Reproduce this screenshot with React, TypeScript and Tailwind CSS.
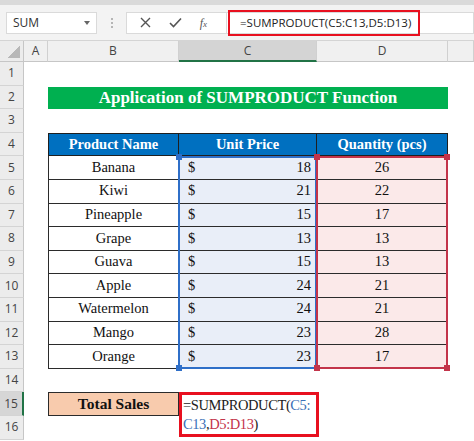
import React from 'react';

const rows = [
  { name: 'Banana', price: 18, qty: 26 },
  { name: 'Kiwi', price: 21, qty: 22 },
  { name: 'Pineapple', price: 15, qty: 17 },
  { name: 'Grape', price: 13, qty: 13 },
  { name: 'Guava', price: 15, qty: 13 },
  { name: 'Apple', price: 24, qty: 21 },
  { name: 'Watermelon', price: 24, qty: 21 },
  { name: 'Mango', price: 23, qty: 28 },
  { name: 'Orange', price: 23, qty: 17 },
];

const ui = { fontFamily: '"Open Sans", "Liberation Sans", sans-serif' };
const serif = { fontFamily: '"Liberation Serif", "Times New Roman", serif' };

const Handle: React.FC<{ className: string }> = ({ className }) => (
  <span className={`absolute w-[6px] h-[6px] ${className}`} />
);

const App: React.FC = () => {
  return (
    <div className="w-[474px] h-[441px] overflow-hidden bg-white">
      {/* top toolbar */}
      <div className="h-[5px] bg-[#dadada]" />
      <div className="h-[36px] bg-[#f3f3f3] flex items-center border-b border-[#d4d4d4]" style={ui}>
        <div className="ml-[6px] w-[91px] h-[22px] bg-white border border-[#dadada] flex items-center justify-between px-[6px]">
          <span className="text-[12px] text-[#333]">SUM</span>
          <span className="w-0 h-0 border-l-[3px] border-r-[3px] border-t-[4px] border-l-transparent border-r-transparent border-t-[#666]" />
        </div>
        <div className="w-[29px] flex flex-col items-center gap-[2px]">
          <span className="w-[2px] h-[2px] bg-[#b5b5b5]" />
          <span className="w-[2px] h-[2px] bg-[#b5b5b5]" />
          <span className="w-[2px] h-[2px] bg-[#b5b5b5]" />
        </div>
        <div className="w-[100px] h-[22px] bg-white border border-r-0 border-[#dadada] flex items-center justify-around pl-[4px] pr-[10px]">
          <svg width="11" height="11" viewBox="0 0 11 11">
            <path d="M1 1 L10 10 M10 1 L1 10" stroke="#555" strokeWidth="1.4" />
          </svg>
          <svg width="13" height="11" viewBox="0 0 13 11">
            <path d="M1 6 L4.5 9.5 L12 1.5" stroke="#555" strokeWidth="1.6" fill="none" />
          </svg>
          <span className="text-[12px] italic text-[#555]" style={serif}>
            f<span className="text-[9px]">x</span>
          </span>
        </div>
        <div className="flex-1 h-[22px] bg-white border border-[#dadada] flex items-center">
          <div className="ml-[1px] h-[26px] w-[192px] border-2 border-[#e8101f] flex items-center pl-[10px]">
            <span className="text-[11.5px] text-[#222]" style={ui}>
              =SUMPRODUCT(C5:C13,D5:D13)
            </span>
          </div>
        </div>
      </div>

      {/* sheet */}
      <div className="grid grid-cols-[24px_24px_131px_138px_131px_1fr] grid-rows-[21px_repeat(16,23.6px)]">
        {/* column headers */}
        <div className="col-start-1 row-start-1 bg-[#ececec] border-r border-b border-[#c6c6c6] flex items-end justify-end p-[3px]">
          <span
            className="w-[12px] h-[12px]"
            style={{ background: 'linear-gradient(135deg, transparent 50%, #b8b8b8 50%)' }}
          />
        </div>
        {['A', 'B', 'C', 'D', ''].map((c, i) => (
          <div
            key={c + i}
            className={`row-start-1 flex items-center justify-center text-[12px] text-[#444] border-r border-[#d0d0d0] ${
              c === 'C' ? 'bg-[#d4d4d4] border-b-2 border-b-[#217346]' : 'bg-[#f0f0f0] border-b border-b-[#c6c6c6]'
            }`}
            style={{ ...ui, gridColumnStart: i + 2 }}
          >
            {c}
          </div>
        ))}

        {/* row headers */}
        {Array.from({ length: 16 }, (_, i) => (
          <div
            key={i}
            className={`col-start-1 flex items-center justify-center text-[12px] text-[#444] border-b border-[#d4d4d4] ${
              i === 14 ? 'bg-[#d6d6d6] border-r-2 border-r-[#217346]' : 'bg-[#ececec] border-r border-r-[#c6c6c6]'
            }`}
            style={{ ...ui, gridRowStart: i + 2 }}
          >
            {i + 1}
          </div>
        ))}

        {/* title */}
        <div
          className="col-start-3 col-span-3 row-start-3 bg-[#00b050] flex items-center justify-center text-white font-bold text-[17px] mt-[1px]"
          style={serif}
        >
          Application of SUMPRODUCT Function
        </div>

        {/* table header */}
        {['Product Name', 'Unit Price', 'Quantity (pcs)'].map((h, i) => (
          <div
            key={h}
            className={`row-start-5 bg-[#0070c0] text-white font-bold text-[14.5px] flex items-center justify-center border-t border-b border-r border-[#1f1f1f] ${
              i === 0 ? 'border-l' : ''
            }`}
            style={{ ...serif, gridColumnStart: i + 3 }}
          >
            {h}
          </div>
        ))}

        {/* table body */}
        {rows.map((r, i) => (
          <React.Fragment key={r.name}>
            <div
              className="col-start-3 flex items-center justify-center text-[14.5px] text-[#111] border-l border-r border-b border-[#2b2b2b]"
              style={{ ...serif, gridRowStart: i + 6 }}
            >
              {r.name}
            </div>
            <div
              className="col-start-4 bg-[#e9eef8] flex items-center justify-between pl-[9px] pr-[5px] text-[14.5px] text-[#111] border-r border-b border-[#2b2b2b]"
              style={{ ...serif, gridRowStart: i + 6 }}
            >
              <span>$</span>
              <span>{r.price}</span>
            </div>
            <div
              className="col-start-5 bg-[#fbe9e9] flex items-center justify-center text-[14.5px] text-[#111] border-r border-b border-[#2b2b2b]"
              style={{ ...serif, gridRowStart: i + 6 }}
            >
              {r.qty}
            </div>
          </React.Fragment>
        ))}

        {/* reference highlights */}
        <div className="col-start-4 row-start-6 row-span-9 relative border-2 border-[#2f6fc8] pointer-events-none -ml-[1px]">
          <Handle className="bg-[#2f6fc8] -left-[4px] -top-[4px]" />
          <Handle className="bg-[#2f6fc8] -left-[4px] -bottom-[4px]" />
        </div>
        <div className="col-start-5 row-start-6 row-span-9 relative border-2 border-[#c3344a] pointer-events-none -ml-[1px]">
          <Handle className="bg-[#c3344a] -left-[4px] -top-[4px]" />
          <Handle className="bg-[#c3344a] -right-[4px] -top-[4px]" />
          <Handle className="bg-[#c3344a] -left-[4px] -bottom-[4px]" />
          <Handle className="bg-[#c3344a] -right-[4px] -bottom-[4px]" />
        </div>

        {/* total sales */}
        <div
          className="col-start-3 row-start-16 bg-[#f8cbad] border border-[#2b2b2b] flex items-center justify-center font-bold text-[15.5px] text-[#111]"
          style={serif}
        >
          Total Sales
        </div>
        <div
          className="col-start-4 row-start-16 row-span-2 z-10 bg-white border-[3px] border-[#e8101f] mb-[3px] -mr-[2px] pl-[1px] pt-[1px] text-[14.5px] leading-[19px] tracking-[-0.4px] text-[#222] overflow-hidden whitespace-nowrap"
          style={serif}
        >
          <div>
            =SUMPRODUCT(<span className="text-[#3a6fb7]">C5:</span>
          </div>
          <div>
            <span className="text-[#3a6fb7]">C13</span>,<span className="text-[#c3344a]">D5:D13</span>)
          </div>
        </div>
      </div>
    </div>
  );
};

export default App;
